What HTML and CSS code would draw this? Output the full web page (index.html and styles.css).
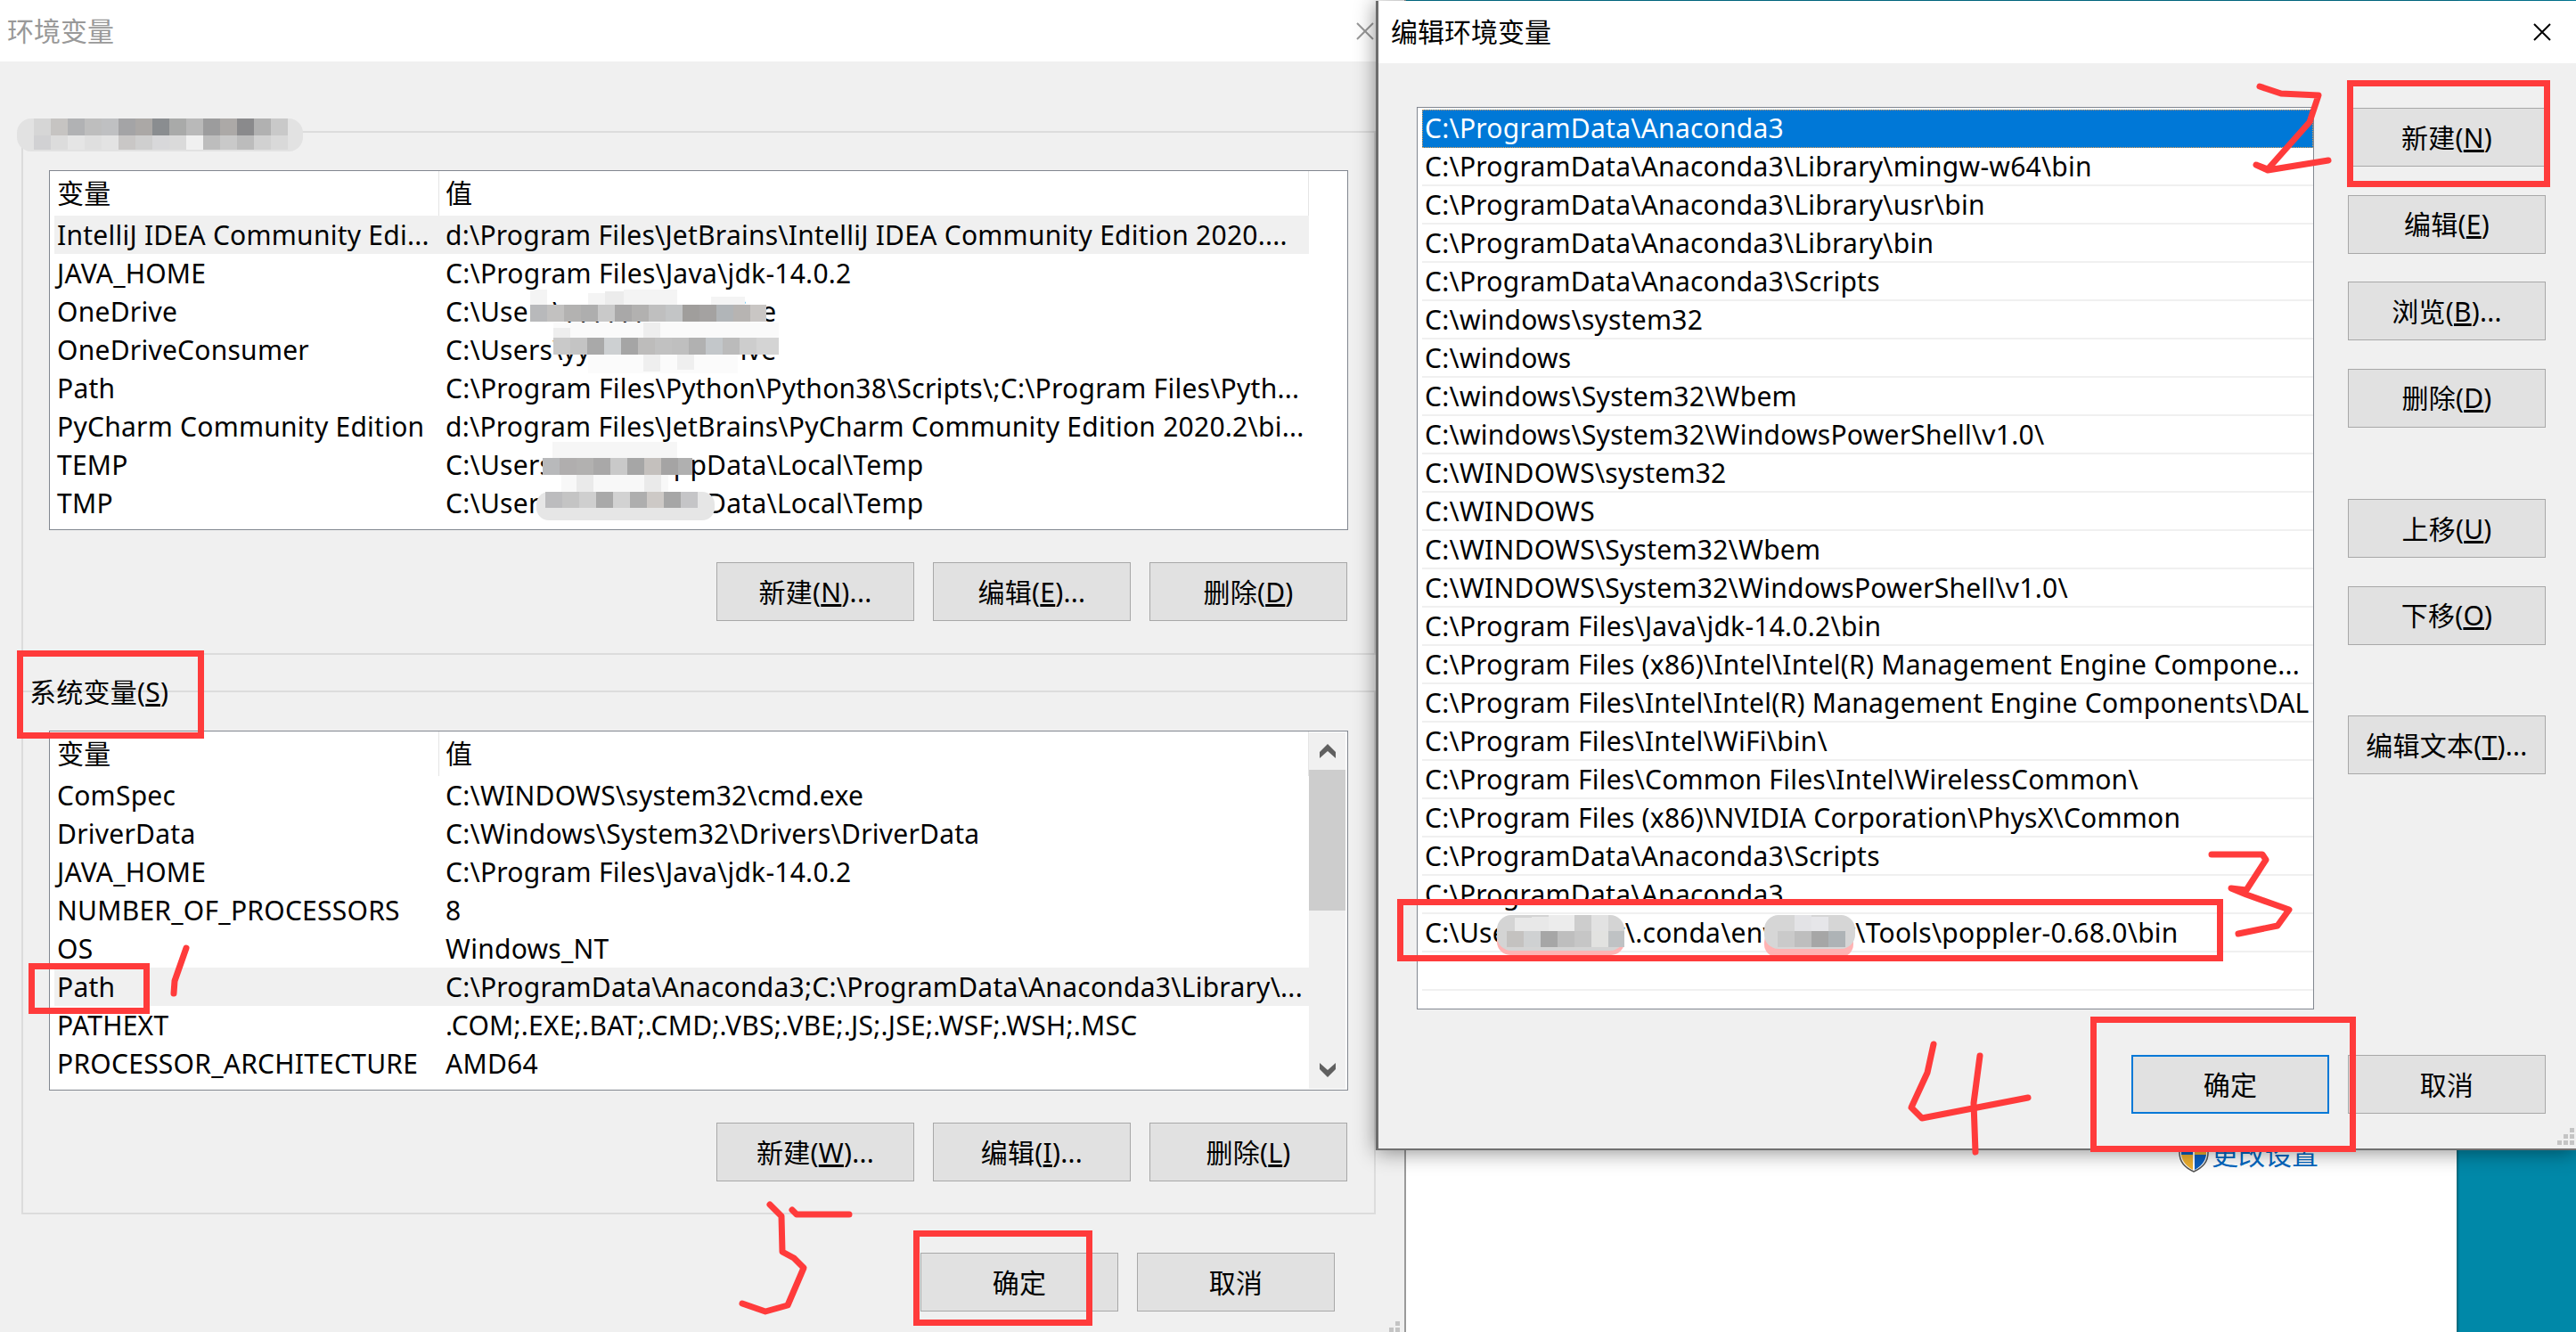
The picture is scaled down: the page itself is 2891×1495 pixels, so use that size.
FILE: index.html
```html
<!DOCTYPE html>
<html lang="zh-CN">
<head>
<meta charset="utf-8">
<title>环境变量</title>
<link rel="stylesheet" href="styles.css">
</head>
<body>
<div class="desktop">
  <div class="back-window">
    <div class="change-link">
      <svg class="shield" viewBox="0 0 34 40" aria-hidden="true"><path d="M1 2h32v16c0 10-7 17-16 21C8 35 1 28 1 18z" fill="#fff" stroke="#555" stroke-width="1.5"/><path d="M3 4h13v16H3z" fill="#0a5fbf"/><path d="M18 20h13c-1 8-6 13-13 17z" fill="#0a5fbf"/><path d="M16 20H3c1 8 6 13 13 17z" fill="#efb02f"/><path d="M18 4h13v16H18z" fill="#efb02f"/></svg>
      <span>更改设置</span>
    </div>
  </div>

  <section class="dialog dialog-left">
    <header class="titlebar titlebar-left">
      <span class="title title-inactive">环境变量</span>
      <svg class="close close-inactive" viewBox="0 0 20 20" aria-hidden="true"><path d="M1 1l18 18M19 1L1 19"/></svg>
    </header>
    <div class="dialog-left-body">
      <div class="group">
        <div class="legend legend-empty"></div>
        <div class="listview listview-user">
          <div class="lv-row lv-head"><span class="lv-name">变量</span><span class="lv-value">值</span></div>
          <div class="lv-row lv-hot"><span class="lv-name">IntelliJ IDEA Community Edi...</span><span class="lv-value">d:\Program Files\JetBrains\IntelliJ IDEA Community Edition 2020....</span></div>
          <div class="lv-row"><span class="lv-name">JAVA_HOME</span><span class="lv-value">C:\Program Files\Java\jdk-14.0.2</span></div>
          <div class="lv-row"><span class="lv-name">OneDrive</span><span class="lv-value">C:\Users\yyyyyy\OneDrive</span></div>
          <div class="lv-row"><span class="lv-name">OneDriveConsumer</span><span class="lv-value">C:\Users\yyyyyy\OneDrive</span></div>
          <div class="lv-row"><span class="lv-name">Path</span><span class="lv-value">C:\Program Files\Python\Python38\Scripts\;C:\Program Files\Pyth...</span></div>
          <div class="lv-row"><span class="lv-name">PyCharm Community Edition</span><span class="lv-value">d:\Program Files\JetBrains\PyCharm Community Edition 2020.2\bi...</span></div>
          <div class="lv-row"><span class="lv-name">TEMP</span><span class="lv-value">C:\Users\yyyyyy\AppData\Local\Temp</span></div>
          <div class="lv-row"><span class="lv-name">TMP</span><span class="lv-value">C:\Users\yyyyyy\AppData\Local\Temp</span></div>
        </div>
        <div class="btn-row">
          <button class="btn">新建(<u>N</u>)...</button>
          <button class="btn">编辑(<u>E</u>)...</button>
          <button class="btn">删除(<u>D</u>)</button>
        </div>
      </div>

      <div class="group">
        <div class="legend">系统变量(<u>S</u>)</div>
        <div class="listview listview-system">
          <div class="lv-main">
            <div class="lv-row lv-head"><span class="lv-name">变量</span><span class="lv-value">值</span></div>
            <div class="lv-row"><span class="lv-name">ComSpec</span><span class="lv-value">C:\WINDOWS\system32\cmd.exe</span></div>
            <div class="lv-row"><span class="lv-name">DriverData</span><span class="lv-value">C:\Windows\System32\Drivers\DriverData</span></div>
            <div class="lv-row"><span class="lv-name">JAVA_HOME</span><span class="lv-value">C:\Program Files\Java\jdk-14.0.2</span></div>
            <div class="lv-row"><span class="lv-name">NUMBER_OF_PROCESSORS</span><span class="lv-value">8</span></div>
            <div class="lv-row"><span class="lv-name">OS</span><span class="lv-value">Windows_NT</span></div>
            <div class="lv-row lv-hot"><span class="lv-name">Path</span><span class="lv-value">C:\ProgramData\Anaconda3;C:\ProgramData\Anaconda3\Library\...</span></div>
            <div class="lv-row"><span class="lv-name">PATHEXT</span><span class="lv-value">.COM;.EXE;.BAT;.CMD;.VBS;.VBE;.JS;.JSE;.WSF;.WSH;.MSC</span></div>
            <div class="lv-row"><span class="lv-name">PROCESSOR_ARCHITECTURE</span><span class="lv-value">AMD64</span></div>
          </div>
          <div class="scrollbar">
            <svg class="chevron" viewBox="0 0 18 16" aria-hidden="true"><path d="M9 0l9 9v7l-9-8-9 8V9z"/></svg>
            <div class="scroll-track"><div class="scroll-thumb"></div></div>
            <svg class="chevron" viewBox="0 0 18 16" aria-hidden="true"><path d="M9 16L0 7V0l9 8 9-8v7z"/></svg>
          </div>
        </div>
        <div class="btn-row">
          <button class="btn">新建(<u>W</u>)...</button>
          <button class="btn">编辑(<u>I</u>)...</button>
          <button class="btn">删除(<u>L</u>)</button>
        </div>
      </div>

      <div class="btn-row btn-row-dialog">
        <button class="btn">确定</button>
        <button class="btn">取消</button>
      </div>
    </div>
    <svg class="grip grip-left" viewBox="0 0 19 19" aria-hidden="true"><path d="M14 0h5v5h-5zM7 7h5v5H7zM14 7h5v5h-5zM0 14h5v5H0zM7 14h5v5H7zM14 14h5v5h-5z"/></svg>
  </section>

  <section class="dialog dialog-right">
    <header class="titlebar titlebar-right">
      <span class="title">编辑环境变量</span>
      <svg class="close" viewBox="0 0 20 20" aria-hidden="true"><path d="M1 1l18 18M19 1L1 19"/></svg>
    </header>
    <div class="dialog-right-body">
      <div class="edit-main">
        <div class="pathlist">
          <div class="path-row path-selected">C:\ProgramData\Anaconda3</div>
          <div class="path-row">C:\ProgramData\Anaconda3\Library\mingw-w64\bin</div>
          <div class="path-row">C:\ProgramData\Anaconda3\Library\usr\bin</div>
          <div class="path-row">C:\ProgramData\Anaconda3\Library\bin</div>
          <div class="path-row">C:\ProgramData\Anaconda3\Scripts</div>
          <div class="path-row">C:\windows\system32</div>
          <div class="path-row">C:\windows</div>
          <div class="path-row">C:\windows\System32\Wbem</div>
          <div class="path-row">C:\windows\System32\WindowsPowerShell\v1.0\</div>
          <div class="path-row">C:\WINDOWS\system32</div>
          <div class="path-row">C:\WINDOWS</div>
          <div class="path-row">C:\WINDOWS\System32\Wbem</div>
          <div class="path-row">C:\WINDOWS\System32\WindowsPowerShell\v1.0\</div>
          <div class="path-row">C:\Program Files\Java\jdk-14.0.2\bin</div>
          <div class="path-row">C:\Program Files (x86)\Intel\Intel(R) Management Engine Compone...</div>
          <div class="path-row">C:\Program Files\Intel\Intel(R) Management Engine Components\DAL</div>
          <div class="path-row">C:\Program Files\Intel\WiFi\bin\</div>
          <div class="path-row">C:\Program Files\Common Files\Intel\WirelessCommon\</div>
          <div class="path-row">C:\Program Files (x86)\NVIDIA Corporation\PhysX\Common</div>
          <div class="path-row">C:\ProgramData\Anaconda3\Scripts</div>
          <div class="path-row">C:\ProgramData\Anaconda3</div>
          <div class="path-row">C:\Users\yyyyyy\.conda\envs\yyyy\Tools\poppler-0.68.0\bin</div>
          <div class="path-row"></div>
          <div class="path-row"></div>
        </div>
        <div class="btn-row btn-row-edit">
          <button class="btn btn-default">确定</button>
          <button class="btn">取消</button>
        </div>
      </div>
      <div class="side-buttons">
        <button class="btn">新建(<u>N</u>)</button>
        <button class="btn">编辑(<u>E</u>)</button>
        <button class="btn">浏览(<u>B</u>)...</button>
        <button class="btn">删除(<u>D</u>)</button>
        <button class="btn btn-up">上移(<u>U</u>)</button>
        <button class="btn">下移(<u>O</u>)</button>
        <button class="btn btn-text">编辑文本(<u>T</u>)...</button>
      </div>
    </div>
    <svg class="grip grip-right" viewBox="0 0 19 19" aria-hidden="true"><path d="M14 0h5v5h-5zM7 7h5v5H7zM14 7h5v5h-5zM0 14h5v5H0zM7 14h5v5H7zM14 14h5v5h-5z"/></svg>
  </section>

  <svg class="overlay" viewBox="0 0 2891 1495" aria-hidden="true">
    <!-- mosaic redactions -->
    <rect x="19" y="133" width="321" height="37" rx="16" fill="#e2e2e2"/>
    <path fill="#d6d6d6" d="M38 133h19v19H38z"/><path fill="#c6c4c2" d="M57 133h19v19H57z"/><path fill="#b1b2b4" d="M76 133h19v19H76z"/><path fill="#bebebe" d="M95 133h19v19H95z"/><path fill="#bfc0c2" d="M114 133h19v19h-19z"/><path fill="#a4a4a6" d="M133 133h19v19h-19z"/><path fill="#aba8a6" d="M152 133h19v19h-19z"/><path fill="#8a8d90" d="M171 133h19v19h-19z"/><path fill="#a9aaa9" d="M190 133h19v19h-19z"/><path fill="#b9b9b9" d="M209 133h19v19h-19z"/><path fill="#9c9c9d" d="M228 133h19v19h-19z"/><path fill="#aca9a7" d="M247 133h19v19h-19z"/><path fill="#8a8a8c" d="M266 133h19v19h-19z"/><path fill="#b1b1b1" d="M285 133h19v19h-19z"/><path fill="#c9c9c9" d="M304 133h19v19h-19z"/>
    <path fill="#d1d1d3" d="M38 152h19v16H38z"/><path fill="#dcdcdc" d="M57 152h19v16H57z"/><path fill="#e5e5e5" d="M76 152h19v16H76z"/><path fill="#dfdfdf" d="M95 152h19v16H95z"/><path fill="#e3e3e3" d="M114 152h19v16h-19z"/><path fill="#c9c7c6" d="M133 152h19v16h-19z"/><path fill="#cfcfcf" d="M152 152h19v16h-19z"/><path fill="#d8d8da" d="M171 152h19v16h-19z"/><path fill="#dadada" d="M190 152h19v16h-19z"/><path fill="#f0f0f0" d="M209 152h19v16h-19z"/><path fill="#bdbdbd" d="M228 152h19v16h-19z"/><path fill="#c9c9c9" d="M247 152h19v16h-19z"/><path fill="#bcbcbc" d="M266 152h19v16h-19z"/><path fill="#d1d1d1" d="M285 152h19v16h-19z"/><path fill="#d9d9d9" d="M304 152h19v16h-19z"/>

    <path fill="#f4f4f4" d="M595 325h19v17h-19zM660 329h19v13h-19zM700 325h41v17h-41zM741 325h19v17h-19zM798 333h19v9h-19zM817 333h19v9h-19z"/>
    <path fill="#ececec" d="M679 327h21v15h-21z"/>
    <path fill="#b8b9bb" d="M595 342h19v19h-19z"/><path fill="#c2c1c0" d="M614 342h19v19h-19z"/><path fill="#b3b2b1" d="M633 342h19v19h-19z"/><path fill="#aeaeae" d="M652 342h19v19h-19z"/><path fill="#c9c9c9" d="M671 342h19v19h-19z"/><path fill="#a9a8a8" d="M690 342h19v19h-19z"/><path fill="#b2b1b0" d="M709 342h19v19h-19z"/><path fill="#bfbfbf" d="M728 342h19v19h-19z"/><path fill="#c3c5c6" d="M747 342h19v19h-19z"/><path fill="#a09e9c" d="M766 342h19v19h-19z"/><path fill="#a4a2a1" d="M785 342h19v19h-19z"/><path fill="#b1b5b8" d="M804 342h19v19h-19z"/><path fill="#b7b4b2" d="M823 342h19v19h-19z"/><path fill="#c9c6c4" d="M842 342h18v19h-18z"/>

    <path fill="#fafafa" d="M621 362h253v17H621z"/>
    <path fill="#eeeeee" d="M621 368h19v11h-19zM722 362h19v17h-19z"/>
    <path fill="#c9c9c9" d="M621 379h19v19h-19z"/><path fill="#c4c4c4" d="M640 379h19v19h-19z"/><path fill="#a9a9a9" d="M659 379h19v19h-19z"/><path fill="#cdd0d2" d="M678 379h19v19h-19z"/><path fill="#a5a5a5" d="M697 379h19v19h-19z"/><path fill="#bdbcbb" d="M716 379h19v19h-19z"/><path fill="#c1c1c1" d="M735 379h19v19h-19z"/><path fill="#bfbfbf" d="M754 379h19v19h-19z"/><path fill="#b1b1b1" d="M773 379h19v19h-19z"/><path fill="#c3c7ca" d="M792 379h19v19h-19z"/><path fill="#bbbbbb" d="M811 379h19v19h-19z"/><path fill="#cdcdcd" d="M830 379h19v19h-19z"/><path fill="#d4d4d4" d="M849 379h25v19h-25z"/>
    <path fill="#fbfbfb" d="M660 398h168v21H660z"/>
    <path fill="#efefef" d="M722 398h19v19h-19zM760 398h19v17h-19z"/>

    <path fill="#f6f6f6" d="M620 496h140v18H620z"/>
    <path fill="#b8b9bb" d="M609 514h19v19h-19z"/><path fill="#b0aeae" d="M628 514h19v19h-19z"/><path fill="#b2b1b0" d="M647 514h19v19h-19z"/><path fill="#a9a8a8" d="M666 514h19v19h-19z"/><path fill="#c9c9c9" d="M685 514h19v19h-19z"/><path fill="#a6a6a6" d="M704 514h19v19h-19z"/><path fill="#c4c0bd" d="M723 514h19v19h-19z"/><path fill="#a5a4a4" d="M742 514h19v19h-19z"/><path fill="#b0b0b0" d="M761 514h16v19h-16z"/>
    <path fill="#f8f8f8" d="M630 533h120v19H630z"/>
    <path fill="#eaeaea" d="M647 533h19v19h-19zM723 533h19v19h-19z"/>
    <rect x="602" y="552" width="200" height="32" rx="14" fill="#e6e6e6"/>
    <path fill="#bcbcbe" d="M612 552h19v18h-19z"/><path fill="#c4c4c4" d="M631 552h19v18h-19z"/><path fill="#cfcfcf" d="M650 552h19v18h-19z"/><path fill="#a9a9a9" d="M669 552h19v18h-19z"/><path fill="#d2d2d2" d="M688 552h19v18h-19z"/><path fill="#aeaeae" d="M707 552h19v18h-19z"/><path fill="#cdc9c6" d="M726 552h19v18h-19z"/><path fill="#a6a6a6" d="M745 552h19v18h-19z"/><path fill="#c5c5c7" d="M764 552h19v18h-19z"/>

    <rect x="1680" y="1040" width="143" height="32" rx="15" fill="#ffb3b3"/>
    <rect x="1680" y="1027" width="143" height="40" rx="16" fill="#d4d4d4"/>
    <path fill="#e8e8e8" d="M1700 1030h19v15h-19zM1719 1029h19v16h-19z"/><path fill="#ececec" d="M1738 1027h38v18h-38z"/><path fill="#cdcdcd" d="M1767 1027h19v18h-19z"/><path fill="#e2e2e2" d="M1786 1027h19v18h-19z"/>
    <path fill="#c4c2c0" d="M1691 1045h19v18h-19z"/><path fill="#cfd1d2" d="M1710 1045h19v18h-19z"/><path fill="#a6a6a6" d="M1729 1045h19v18h-19z"/><path fill="#bebebe" d="M1748 1045h19v18h-19z"/><path fill="#c6c6c6" d="M1767 1045h19v18h-19z"/><path fill="#e2e2e0" d="M1786 1045h19v18h-19z"/><path fill="#bfc2c4" d="M1805 1045h18v18h-18z"/>
    <rect x="1980" y="1044" width="100" height="30" rx="14" fill="#ffb3b3"/>
    <rect x="1980" y="1027" width="102" height="38" rx="16" fill="#d6d6d6"/>
    <path fill="#e3e3e6" d="M2014 1027h19v18h-19z"/><path fill="#e6e6e9" d="M2033 1029h19v16h-19z"/>
    <path fill="#cacaca" d="M1995 1045h19v18h-19z"/><path fill="#bebebe" d="M2014 1045h19v18h-19z"/><path fill="#a6a6a6" d="M2033 1045h19v18h-19z"/><path fill="#aeb3b6" d="M2052 1045h19v18h-19z"/>

    <!-- annotation boxes -->
    <g class="mark-box">
      <rect x="22.5" y="733.5" width="203" height="92"/>
      <rect x="35.5" y="1084.5" width="129" height="50"/>
      <rect x="1028.5" y="1384.5" width="194" height="100"/>
      <rect x="2637.5" y="93.5" width="221" height="113"/>
      <rect x="1571.5" y="1012.5" width="920" height="63"/>
      <rect x="2349.5" y="1144.5" width="291" height="145"/>
    </g>
    <!-- handwritten step numbers -->
    <g class="mark-ink">
      <polyline points="209,1064 196,1101 195,1115"/>
      <polyline points="2536,97 2560,105 2602,107 2592,137 2545,190 2532,185 2545,191 2613,180"/>
      <polyline points="2482,959 2539,959 2543,965 2521,999 2504,997 2521,1004 2569,1021 2556,1039 2512,1048"/>
      <polyline points="2170,1172 2163,1204 2145,1243 2157,1255 2276,1232"/>
      <polyline points="2222,1185 2215,1238 2217,1293"/>
      <polyline points="864,1352 877,1365 878,1405 891,1412 902,1423 884,1465 859,1472 833,1463"/>
      <polyline points="889,1358 894,1363 953,1363"/>
    </g>
  </svg>
</div>
</body>
</html>
```
FILE: styles.css
```css
* { box-sizing: border-box; }
html, body { margin: 0; padding: 0; }
body {
  width: 2891px;
  height: 1495px;
  overflow: hidden;
  font-family: "Noto Sans", "Noto Sans CJK SC", sans-serif;
  font-size: 30px;
  letter-spacing: .25px;
  color: #000;
}
.desktop {
  position: relative;
  width: 2891px;
  height: 1495px;
  overflow: hidden;
  background: #0088a8;
}
.back-window {
  position: absolute;
  left: 1576px;
  top: 1px;
  width: 1181px;
  height: 1494px;
  background: #fff;
  box-shadow: 1px 0 0 #1d6a78, 2px 0 2px rgba(0, 0, 0, .25);
}
.change-link {
  position: absolute;
  left: 869px;
  top: 1275px;
  display: flex;
  align-items: center;
  gap: 3px;
  color: #0067c0;
  font-size: 30px;
  line-height: 32px;
  letter-spacing: 0;
}
.shield { width: 34px; height: 40px; }

.dialog { position: absolute; background: #f0f0f0; }
.dialog-left {
  left: 0;
  top: 0;
  width: 1578px;
  height: 1495px;
  border-right: 2px solid #9a9a9a;
}
.dialog-right {
  left: 1544px;
  top: 1px;
  width: 1347px;
  height: 1290px;
  border-left: 3px solid #6d6d6d;
  border-bottom: 2px solid #707070;
  box-shadow: 0 2px 22px rgba(0, 0, 0, .45);
}
.titlebar {
  display: flex;
  justify-content: space-between;
  align-items: center;
  background: #fff;
}
.titlebar-left { height: 69px; padding: 0 34px 0 8px; }
.titlebar-right { height: 70px; padding: 0 28px 0 14px; }
.title { font-size: 30px; line-height: 40px; letter-spacing: 0; }
.title-inactive { color: #999; }
.close { width: 20px; height: 20px; fill: none; stroke: #000; stroke-width: 2; }
.close-inactive { stroke: #999; }

.dialog-left-body { padding: 78px 0 0 24px; }
.group {
  width: 1520px;
  height: 588px;
  margin-bottom: 40px;
  padding: 0 30px 0 29px;
  border: 2px solid #dcdcdc;
  border-radius: 0;
}
.group:nth-child(2) { margin-bottom: 43px; }
.legend {
  width: fit-content;
  height: 40px;
  margin: -20px 0 0 -24px;
  padding: 0 2px;
  line-height: 40px;
  white-space: nowrap;
}
.legend-empty { width: 300px; background: #f0f0f0; }

.listview {
  display: flex;
  width: 1458px;
  height: 404px;
  margin-top: 23px;
  padding-left: 5px;
  background: #fff;
  border: 1px solid #828790;
}
.listview-user { display: block; margin-top: 22px; padding-right: 43px; }
.lv-main { flex: 1; min-width: 0; }
.lv-row {
  display: grid;
  grid-template-columns: 431px minmax(0, 1fr);
  height: 43px;
  line-height: 43px;
  white-space: nowrap;
}
.lv-head { height: 50px; line-height: 50px; }
.lv-hot { background: #f0f0f0; }
.lv-name { padding-left: 3px; overflow: hidden; }
.lv-value { padding-left: 8px; }
.lv-head .lv-value { border-left: 1px solid #e5e5e5; border-right: 1px solid #e5e5e5; padding-left: 7px; }

.scrollbar {
  display: flex;
  flex-direction: column;
  align-items: center;
  width: 41px;
  flex: none;
  margin: 1px 2px 1px 0;
  background: #f0f0f0;
}
.chevron { width: 18px; height: 16px; flex: none; margin: 13px 0; fill: #606060; }
.scroll-track { flex: 1; width: 100%; }
.scroll-thumb { width: 100%; height: 158px; background: #cdcdcd; }

.btn-row { display: flex; justify-content: flex-end; gap: 21px; margin-top: 36px; }
.btn-row-dialog { width: 1474px; margin-top: 0; }
.btn {
  width: 222px;
  height: 66px;
  padding: 0 0 3px;
  font: inherit;
  letter-spacing: .25px;
  color: #000;
  background: #e1e1e1;
  border: 1px solid #a8a8a8;
  border-radius: 0;
}
.btn-default { border: 2px solid #0078d7; }

.dialog-right-body { display: flex; gap: 38px; padding: 49px 0 0 43px; }
.edit-main { width: 1007px; }
.pathlist {
  height: 1013px;
  padding: 2px 0 0 5px;
  overflow: hidden;
  background: #fff;
  border: 1px solid #828790;
}
.path-row {
  height: 43px;
  padding-left: 3px;
  line-height: 41px;
  white-space: nowrap;
  border-bottom: 2px solid #f0f0f0;
}
.path-selected {
  margin-right: 0;
  color: #fff;
  background: #0078d7;
  border-bottom: 0;
  outline: 1px dotted #e8a050;
  outline-offset: -1px;
}
.btn-row-edit { margin-top: 51px; gap: 21px; margin-right: -260px; justify-content: flex-end; }
.side-buttons { display: flex; flex-direction: column; gap: 31.5px; width: 222px; padding-top: 1px; }
.btn-up { margin-top: 49px; }
.btn-text { margin-top: 48px; }

.grip { position: absolute; width: 19px; height: 19px; fill: #c4c4c4; }
.grip-left { left: 1552px; top: 1483px; }
.grip-right { right: 2px; top: 1265px; }

.overlay { position: absolute; left: 0; top: 0; width: 2891px; height: 1495px; pointer-events: none; }
.mark-box rect { fill: none; stroke: #ff3b3b; stroke-width: 7; }
.mark-ink polyline { fill: none; stroke: #ff3b3b; stroke-width: 7; stroke-linecap: round; stroke-linejoin: round; }
```
